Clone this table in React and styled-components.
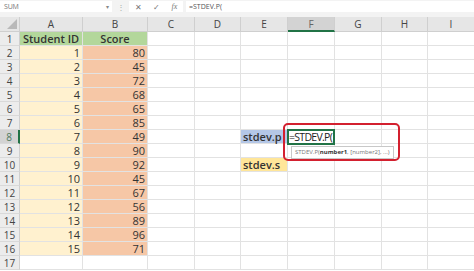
import styled, { createGlobalStyle } from "styled-components";

const GlobalStyle = createGlobalStyle`
  html, body {
    margin: 0;
    padding: 0;
    background: #ffffff;
  }
  body {
    font-family: "Open Sans", "Noto Sans", sans-serif;
  }
`;

const columns = ["A", "B", "C", "D", "E", "F", "G", "H", "I"];
const colWidths = [63, 65, 47, 46, 47, 47, 47, 46, 47];
const scores = [80, 45, 72, 68, 65, 85, 49, 90, 92, 45, 67, 56, 89, 96, 71];

const App = () => {
  const rows = [];
  for (let r = 1; r <= 17; r++) {
    rows.push(
      <RowHead key={"h" + r} $active={r === 8}>
        {r}
      </RowHead>
    );
    columns.forEach((col) => {
      let content = null;
      let fill = "#ffffff";
      let align = "left";
      let bold = false;
      if (r === 1 && (col === "A" || col === "B")) {
        content = col === "A" ? "Student ID" : "Score";
        fill = "#b3d79b";
        align = "center";
        bold = true;
      } else if (r >= 2 && r <= 16 && col === "A") {
        content = r - 1;
        fill = "#fff1cf";
        align = "right";
      } else if (r >= 2 && r <= 16 && col === "B") {
        content = scores[r - 2];
        fill = "#f6c7a6";
        align = "right";
      } else if (r === 8 && col === "E") {
        content = "stdev.p";
        fill = "#b4c7e7";
        bold = true;
      } else if (r === 10 && col === "E") {
        content = "stdev.s";
        fill = "#ffe699";
        bold = true;
      }
      if (r === 8 && col === "F") {
        rows.push(
          <ActiveCell key={col + r}>
            =STDEV.P(<Caret />
          </ActiveCell>
        );
        return;
      }
      rows.push(
        <Cell key={col + r} $fill={fill} $align={align} $bold={bold}>
          {content}
        </Cell>
      );
    });
  }

  return (
    <Page>
      <GlobalStyle />
      <FormulaBar>
        <NameBox>
          <span>SUM</span>
          <Arrow>▾</Arrow>
        </NameBox>
        <Dots>⋮</Dots>
        <Buttons>
          <span>✕</span>
          <Check>✓</Check>
          <Fx>fx</Fx>
        </Buttons>
        <FormulaInput>=STDEV.P(</FormulaInput>
      </FormulaBar>
      <Sheet>
        <Corner>
          <svg width="10" height="10" viewBox="0 0 10 10">
            <polygon points="10,0 10,10 0,10" fill="#b9b9b9" />
          </svg>
        </Corner>
        {columns.map((c) => (
          <ColHead key={c} $active={c === "F"}>
            {c}
          </ColHead>
        ))}
        {rows}
        <Highlight>
          <Tooltip>
            STDEV.P(<b>number1</b>, [number2], ...)
          </Tooltip>
        </Highlight>
      </Sheet>
    </Page>
  );
};

const Page = styled.div`
  width: 474px;
  height: 271px;
  overflow: hidden;
  background: #ffffff;
`;

const FormulaBar = styled.div`
  display: flex;
  align-items: flex-start;
  height: 17px;
  background: #f3f3f3;
  padding-top: 1px;
  box-sizing: border-box;
  font-size: 7px;
  color: #666;
`;

const NameBox = styled.div`
  width: 112px;
  height: 11px;
  background: #ffffff;
  display: flex;
  align-items: center;
  justify-content: space-between;
  padding: 0 3px 0 4px;
  box-sizing: border-box;
  color: #777;
  letter-spacing: -0.2px;
`;

const Arrow = styled.span`
  font-size: 6px;
  color: #888;
`;

const Dots = styled.div`
  width: 17px;
  text-align: center;
  color: #aaa;
  font-size: 8px;
  line-height: 11px;
`;

const Buttons = styled.div`
  width: 54px;
  height: 11px;
  background: #ffffff;
  display: flex;
  align-items: center;
  justify-content: space-around;
  font-size: 8px;
  color: #777;
`;

const Check = styled.span`
  color: #777;
`;

const Fx = styled.span`
  font-family: "Liberation Serif", serif;
  font-style: italic;
  font-size: 8px;
`;

const FormulaInput = styled.div`
  flex: 1;
  margin-left: 3px;
  height: 11px;
  background: #ffffff;
  padding-left: 3px;
  line-height: 11px;
  color: #555;
`;

const Sheet = styled.div`
  position: relative;
  display: grid;
  grid-template-columns: 20px ${colWidths.map((w) => w + "px").join(" ")};
  grid-template-rows: 15px repeat(17, 14px);
  font-size: 11px;
  color: #333;
`;

const Corner = styled.div`
  background: #e6e6e6;
  border-right: 1px solid #cfcfcf;
  border-bottom: 1px solid #cfcfcf;
  box-sizing: border-box;
  display: flex;
  align-items: flex-end;
  justify-content: flex-end;
  padding: 0 2px 2px 0;
`;

const ColHead = styled.div`
  background: ${(p) => (p.$active ? "#d3d3d3" : "#e6e6e6")};
  border-right: 1px solid #cfcfcf;
  border-bottom: ${(p) => (p.$active ? "2px solid #217346" : "1px solid #cfcfcf")};
  box-sizing: border-box;
  display: flex;
  align-items: center;
  justify-content: center;
  color: ${(p) => (p.$active ? "#666" : "#444")};
  font-size: 10px;
`;

const RowHead = styled.div`
  background: ${(p) => (p.$active ? "#d3d3d3" : "#ececec")};
  border-right: ${(p) => (p.$active ? "2px solid #217346" : "1px solid #cfcfcf")};
  border-bottom: 1px solid #d9d9d9;
  box-sizing: border-box;
  display: flex;
  align-items: center;
  justify-content: center;
  font-size: 10px;
  color: ${(p) => (p.$active ? "#4e7a5e" : "#444")};
`;

const Cell = styled.div`
  background: ${(p) => p.$fill};
  border-right: 1px solid #e2e2e2;
  border-bottom: 1px solid #e2e2e2;
  box-sizing: border-box;
  display: flex;
  align-items: center;
  justify-content: ${(p) =>
    p.$align === "right" ? "flex-end" : p.$align === "center" ? "center" : "flex-start"};
  padding: 0 2px;
  font-weight: ${(p) => (p.$bold ? 600 : 400)};
  white-space: nowrap;
  color: #333;
`;

const ActiveCell = styled.div`
  border: 2px solid #217346;
  margin: -1px 0 -1px -1px;
  display: flex;
  align-items: center;
  padding-left: 0;
  font-size: 10.5px;
  letter-spacing: -0.7px;
  white-space: nowrap;
  overflow: visible;
  color: #222;
  background: #ffffff;
  z-index: 1;
`;

const Caret = styled.span`
  display: inline-block;
  width: 1px;
  height: 11px;
  margin-left: 1px;
  background: #222;
`;

const Highlight = styled.div`
  position: absolute;
  left: 283px;
  top: 106px;
  width: 117px;
  height: 38px;
  border: 2px solid #d3202f;
  border-radius: 5px;
  box-sizing: border-box;
  pointer-events: none;
  z-index: 2;
`;

const Tooltip = styled.div`
  position: absolute;
  left: 6px;
  top: 21px;
  height: 11px;
  padding: 0 3px;
  background: #ffffff;
  border: 1px solid #c8c8c8;
  font-size: 6px;
  line-height: 10px;
  color: #777;
  white-space: nowrap;
  b {
    color: #333;
  }
`;

export default App;
